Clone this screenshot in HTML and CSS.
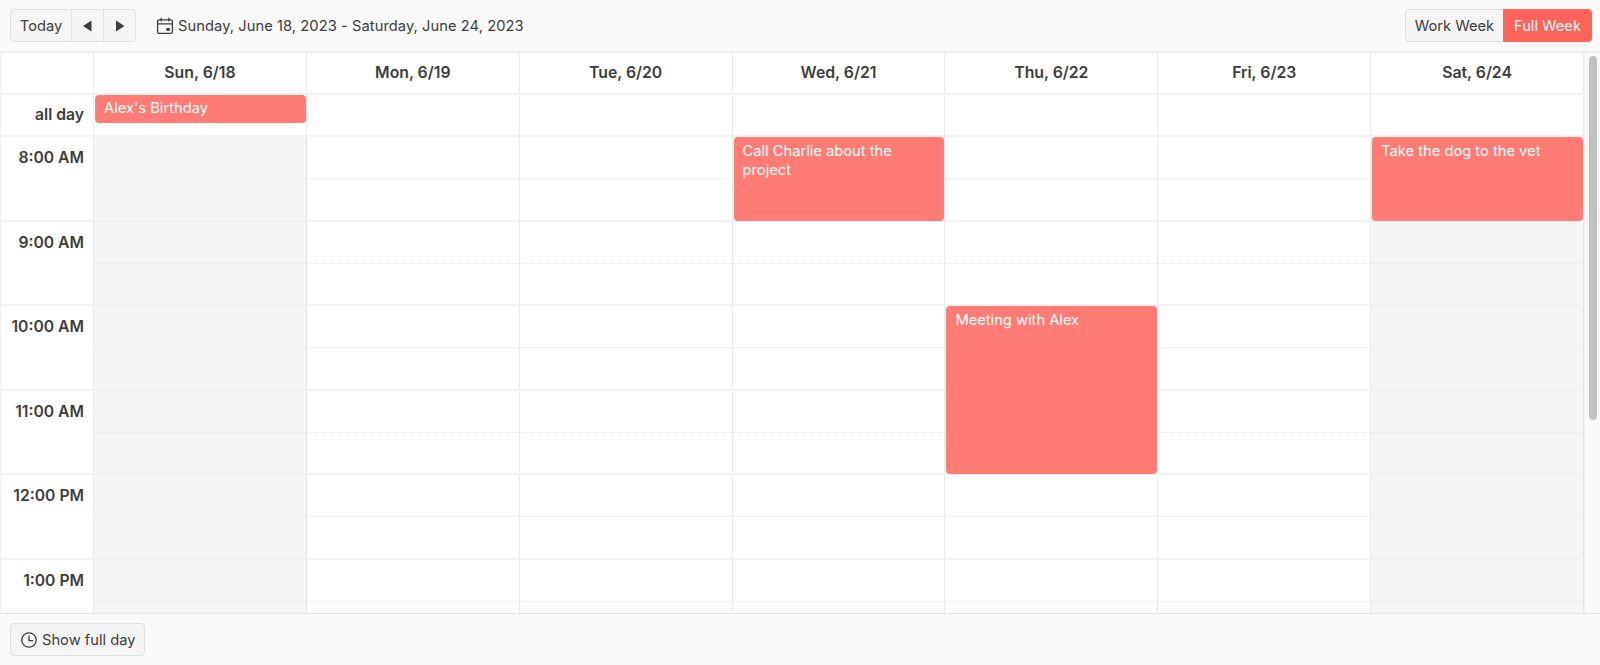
FILE: index.html
```html
<!DOCTYPE html>
<html lang="en">
<head>
<meta charset="utf-8">
<title>Scheduler</title>
<link rel="stylesheet" href="styles.css">
</head>
<body>
<div class="app">
  <header class="toolbar">
    <div class="btn-group">
      <button class="btn">Today</button>
      <button class="btn icon-btn"><svg width="12" height="12" viewBox="0 0 12 12"><path d="M9.5 .5v11L1 6z"/></svg></button>
      <button class="btn icon-btn"><svg width="12" height="12" viewBox="0 0 12 12"><path d="M2 .5v11L10.5 6z"/></svg></button>
    </div>
    <div class="date-range">
      <svg class="cal" width="18" height="18" viewBox="0 0 18 18" fill="none" stroke="#3d3d3d" stroke-width="1.3"><rect x="1.6" y="2.8" width="14.8" height="13.6" rx="1.6"/><path d="M1.6 6.8h14.8M5.2 .8v3.6M12.8 .8v3.6"/><rect x="10.4" y="11" width="3.4" height="2.8" fill="#3d3d3d" stroke="none"/></svg>
      <span>Sunday, June 18, 2023 - Saturday, June 24, 2023</span>
    </div>
    <div class="btn-group view-switch">
      <button class="btn">Work Week</button>
      <button class="btn active">Full Week</button>
    </div>
  </header>

  <main class="body-area">
    <div class="grid">
      <div class="row head-row">
        <div class="cell time"></div>
        <div class="cell day-head">Sun, 6/18</div>
        <div class="cell day-head">Mon, 6/19</div>
        <div class="cell day-head">Tue, 6/20</div>
        <div class="cell day-head">Wed, 6/21</div>
        <div class="cell day-head">Thu, 6/22</div>
        <div class="cell day-head">Fri, 6/23</div>
        <div class="cell day-head">Sat, 6/24</div>
      </div>
      <div class="row allday-row">
        <div class="cell time allday-label">all day</div>
        <div class="cell"><div class="event allday-event">Alex's Birthday</div></div>
        <div class="cell"></div><div class="cell"></div><div class="cell"></div><div class="cell"></div><div class="cell"></div><div class="cell"></div>
      </div>

      <div class="row hour-row">
        <div class="cell time">8:00 AM</div>
        <div class="cell off"></div><div class="cell"></div><div class="cell"></div>
        <div class="cell"><div class="event span-1">Call Charlie about the project</div></div>
        <div class="cell"></div><div class="cell"></div>
        <div class="cell off"><div class="event span-1">Take the dog to the vet</div></div>
      </div>
      <div class="row hour-row">
        <div class="cell time">9:00 AM</div>
        <div class="cell off"></div><div class="cell"></div><div class="cell"></div><div class="cell"></div><div class="cell"></div><div class="cell"></div><div class="cell off"></div>
      </div>
      <div class="row hour-row">
        <div class="cell time">10:00 AM</div>
        <div class="cell off"></div><div class="cell"></div><div class="cell"></div><div class="cell"></div>
        <div class="cell"><div class="event span-2">Meeting with Alex</div></div>
        <div class="cell"></div><div class="cell off"></div>
      </div>
      <div class="row hour-row">
        <div class="cell time">11:00 AM</div>
        <div class="cell off"></div><div class="cell"></div><div class="cell"></div><div class="cell"></div><div class="cell"></div><div class="cell"></div><div class="cell off"></div>
      </div>
      <div class="row hour-row">
        <div class="cell time">12:00 PM</div>
        <div class="cell off"></div><div class="cell"></div><div class="cell"></div><div class="cell"></div><div class="cell"></div><div class="cell"></div><div class="cell off"></div>
      </div>
      <div class="row hour-row">
        <div class="cell time">1:00 PM</div>
        <div class="cell off"></div><div class="cell"></div><div class="cell"></div><div class="cell"></div><div class="cell"></div><div class="cell"></div><div class="cell off"></div>
      </div>
    </div>
    <div class="scrollbar"><div class="thumb"></div></div>
  </main>

  <footer class="footer">
    <button class="btn full-day">
      <svg width="18" height="18" viewBox="0 0 18 18" fill="none" stroke="#3d3d3d" stroke-width="1.3"><circle cx="9" cy="9" r="7.2"/><path d="M9 4.4V9.6h4.2"/></svg>
      Show full day
    </button>
  </footer>
</div>
</body>
</html>
```

FILE: styles.css
```css
* { box-sizing: border-box; }
html, body { margin: 0; height: 100%; }
body {
  font-family: Inter, "Liberation Sans", sans-serif;
  font-size: 14.7px;
  color: #3d3d3d;
  background: #fff;
  overflow: hidden;
}
.app { display: flex; flex-direction: column; height: 665px; }

.toolbar {
  flex: 0 0 53px;
  display: flex;
  align-items: center;
  padding: 0 8px 0 10px;
  background: #fafafa;
  border-bottom: 2px solid #efefef;
}
.btn-group { display: flex; }
.btn {
  height: 33px;
  padding: 0 8.8px;
  font: inherit;
  color: #3d3d3d;
  background: #f5f5f5;
  border: 1px solid #e0e0e0;
  display: flex;
  align-items: center;
  justify-content: center;
}
.btn-group .btn + .btn { margin-left: -1px; }
.btn-group .btn:first-child { border-radius: 4px 0 0 4px; }
.btn-group .btn:last-child { border-radius: 0 4px 4px 0; }
.icon-btn { width: 33px; padding: 0; }
.icon-btn svg { fill: #3d3d3d; }
.date-range { display: flex; align-items: center; gap: 4px; margin-left: 20px; letter-spacing: 0.06px; }
.view-switch { margin-left: auto; }
.btn.active { background: #ff6259; border-color: #ff6259; color: #fff; padding: 0 10px; }

.body-area { flex: 1 1 0; min-height: 0; display: flex; overflow: hidden; }
.grid { flex: 1 1 0; min-width: 0; border-left: 1px solid #efefef; overflow: hidden; }
.row {
  display: grid;
  grid-template-columns: 93px repeat(7, 1fr);
  border-bottom: 2px solid #f1f1f1;
}
.head-row { height: 42px; }
.allday-row { height: 42px; }
.hour-row { height: 84.6px; }
.cell { position: relative; border-right: 1px solid #e9e9e9; min-width: 0; }
.time {
  text-align: right;
  padding: 11px 9px 0 0;
  font-weight: 600;
  font-size: 15.7px;
}
.allday-label { padding-top: 10px; }
.day-head { font-weight: 600; font-size: 15.8px; display: flex; align-items: center; justify-content: center; padding-bottom: 1px; }
.hour-row .cell::after {
  content: "";
  position: absolute;
  left: 0; right: 0; top: 41px;
  border-top: 1px dotted #e8e8e8;
}
.hour-row .cell.time::after { display: none; }
.off { background: #f5f5f5; }
.off.off { border-right-color: #e2e2e2; }

.event {
  position: absolute;
  z-index: 1;
  left: 1px; right: 0; top: 0;
  padding: 5px 9px;
  color: #fff;
  line-height: 19px;
  background: #ff7b73;
  border-radius: 4px;
}
.allday-event { height: 28px; top: 0; padding-top: 4px; }
.span-1 { height: 84px; }
.span-2 { height: 168px; }

.scrollbar { flex: 0 0 16px; background: #fafafa; border-left: 1px solid #efefef; padding: 3px 3px 0 4px; }
.thumb { height: 364px; background: #c1c1c1; border-radius: 4px; }

.footer {
  flex: 0 0 52px;
  display: flex;
  align-items: center;
  padding: 0 10px;
  background: #fafafa;
  border-top: 1px solid #e4e4e4;
}
.full-day { border-radius: 4px; gap: 4px; padding: 0 9px; }
```
